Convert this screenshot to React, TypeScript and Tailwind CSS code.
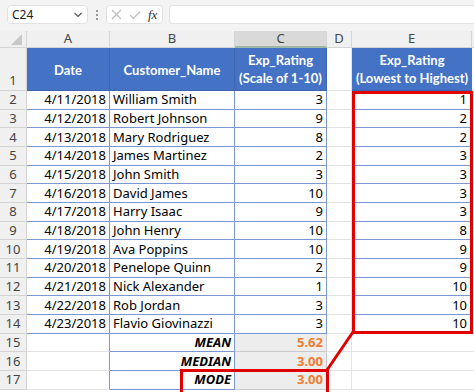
import React from "react";

const cols = [27, 83, 125, 92, 25, 120];
const data: [string, string, string, string][] = [
  ["4/11/2018", "William Smith", "3", "1"],
  ["4/12/2018", "Robert Johnson", "9", "2"],
  ["4/13/2018", "Mary Rodriguez", "8", "2"],
  ["4/14/2018", "James Martinez", "2", "3"],
  ["4/15/2018", "John Smith", "3", "3"],
  ["4/16/2018", "David James", "10", "3"],
  ["4/17/2018", "Harry Isaac", "9", "3"],
  ["4/18/2018", "John Henry", "10", "8"],
  ["4/19/2018", "Ava Poppins", "10", "9"],
  ["4/20/2018", "Penelope Quinn", "2", "9"],
  ["4/21/2018", "Nick Alexander", "1", "10"],
  ["4/22/2018", "Rob Jordan", "3", "10"],
  ["4/23/2018", "Flavio Giovinazzi", "3", "10"],
];
const stats: [string, string][] = [
  ["MEAN", "5.62"],
  ["MEDIAN", "3.00"],
  ["MODE", "3.00"],
];

const RH = "h-[18.67px]";

function RowHead({ n, tall }: { n: number; tall?: boolean }) {
  return (
    <div
      className={`w-[27px] shrink-0 bg-[#f0f0f0] border-r border-b border-[#d4d4d4] text-[#444] text-[13px] font-normal flex justify-center ${
        tall ? "items-end pb-[1px]" : "items-center"
      }`}
      style={{ fontFamily: '"Noto Sans", sans-serif' }}
    >
      {n}
    </div>
  );
}

export default function App() {
  return (
    <div
      className="w-[474px] h-[392px] overflow-hidden bg-white relative"
      style={{ fontFamily: '"Noto Sans", "Open Sans", sans-serif' }}
    >
      {/* toolbar */}
      <div className="h-[31px] bg-[#f3f3f3] flex items-start pt-[5px] pl-[7px]">
        <div className="w-[81px] h-[19px] bg-white rounded-[4px] border border-[#e2e2e2] flex items-center justify-between px-[4px] text-[12px] text-[#222]">
          <span>C24</span>
          <svg width="10" height="8" viewBox="0 0 10 8">
            <path d="M1.5 2 L5 5.5 L8.5 2" fill="none" stroke="#555" strokeWidth="1.2" />
          </svg>
        </div>
        <div className="w-[18px] h-[19px] flex flex-col items-center justify-center gap-[2px]">
          <div className="w-[2px] h-[2px] bg-[#999]" />
          <div className="w-[2px] h-[2px] bg-[#999]" />
          <div className="w-[2px] h-[2px] bg-[#999]" />
        </div>
        <div className="w-[57px] h-[19px] bg-white rounded-[4px] border border-[#e2e2e2] flex items-center pl-[4px] gap-[7px]">
          <svg width="11" height="11" viewBox="0 0 11 11">
            <path d="M1 1 L10 10 M10 1 L1 10" stroke="#bdbdbd" strokeWidth="1.2" />
          </svg>
          <svg width="12" height="10" viewBox="0 0 12 10">
            <path d="M1 5 L4.5 8.5 L11 1.5" fill="none" stroke="#bdbdbd" strokeWidth="1.2" />
          </svg>
          <span
            className="text-[13px] italic text-[#333] leading-none"
            style={{ fontFamily: '"Liberation Serif", serif' }}
          >
            fx
          </span>
        </div>
        <div className="ml-[6px] flex-1 h-[19px] bg-white rounded-l-[4px] border border-r-0 border-[#e2e2e2]" />
      </div>

      {/* column header row */}
      <div className="flex h-[17px] text-[13px] text-[#444]">
        <div className="w-[27px] shrink-0 bg-[#f0f0f0] border-r border-b border-[#d4d4d4] relative">
          <svg width="27" height="17" className="absolute inset-0">
            <path d="M22 3 L22 14 L11 14 Z" fill="#c8c8c8" />
          </svg>
        </div>
        {["A", "B", "C", "D", "E"].map((c, i) => (
          <div
            key={c}
            style={{ width: cols[i + 1] }}
            className={`shrink-0 flex items-center justify-center border-r border-[#d4d4d4] ${
              c === "C"
                ? "bg-[#d9d9d9] border-b-2 border-b-[#9fb7a5]"
                : "bg-[#f0f0f0] border-b"
            }`}
          >
            {c}
          </div>
        ))}
        <div className="flex-1 bg-[#f0f0f0] border-b border-[#d4d4d4]" />
      </div>

      {/* header row 1 */}
      <div
        className="flex h-[43px] text-[13px] font-bold text-white leading-[18px] whitespace-nowrap"
        style={{ fontFamily: 'Lato, "Noto Sans", sans-serif' }}
      >
        <RowHead n={1} tall />
        <div className="w-[83px] shrink-0 bg-[#4472c4] border-r border-b border-[#3d64ad] flex items-center justify-center pt-[2px]">
          Date
        </div>
        <div className="w-[125px] shrink-0 bg-[#4472c4] border-r border-b border-[#3d64ad] flex items-center justify-center pt-[2px]">
          Customer_Name
        </div>
        <div className="w-[92px] shrink-0 bg-[#4472c4] border-r border-b border-[#3d64ad] flex flex-col items-center justify-center">
          <span>Exp_Rating</span>
          <span>(Scale of 1-10)</span>
        </div>
        <div className="w-[25px] shrink-0 border-r border-b border-[#e3e3e3]" />
        <div className="w-[120px] shrink-0 bg-[#4472c4] border-b border-[#3d64ad] flex flex-col items-center justify-center">
          <span>Exp_Rating</span>
          <span>(Lowest to Highest)</span>
        </div>
        <div className="flex-1 border-b border-[#e3e3e3]" />
      </div>

      {/* data rows */}
      {data.map((r, i) => (
        <div key={i} className={`flex ${RH} text-[13px] text-black leading-none`}>
          <RowHead n={i + 2} />
          <div className="w-[83px] shrink-0 border-r border-b border-[#7b97d1] flex items-center justify-end pr-[3px]">
            {r[0]}
          </div>
          <div className="w-[125px] shrink-0 border-r border-b border-[#7b97d1] flex items-center pl-[3px] whitespace-nowrap">
            {r[1]}
          </div>
          <div className="w-[92px] shrink-0 border-r border-b border-[#7b97d1] flex items-center justify-end pr-[3px]">
            {r[2]}
          </div>
          <div className="w-[25px] shrink-0 border-r border-b border-[#e3e3e3]" />
          <div className="w-[120px] shrink-0 border-b border-[#7b97d1] flex items-center justify-end pr-[5px]">
            {r[3]}
          </div>
          <div className="flex-1 border-b border-[#e3e3e3]" />
        </div>
      ))}

      {stats.map((s, i) => (
        <div key={s[0]} className={`flex ${RH} text-[13px] leading-none`}>
          <RowHead n={i + 15} />
          <div className="w-[83px] shrink-0 border-r border-b border-r-[#7b97d1] border-b-[#e3e3e3]" />
          <div className="w-[125px] shrink-0 border-r border-b border-[#7b97d1] flex items-center justify-end pr-[3px] font-bold italic text-black">
            {s[0]}
          </div>
          <div className="w-[92px] shrink-0 border-r border-b border-[#c9c9c9] bg-[#ededed] flex items-center justify-end pr-[3px] font-bold text-[#ed7d31]">
            {s[1]}
          </div>
          <div className="w-[25px] shrink-0 border-r border-b border-[#e3e3e3]" />
          <div className="w-[120px] shrink-0 border-b border-[#e3e3e3]" />
          <div className="flex-1 border-b border-[#e3e3e3]" />
        </div>
      ))}

      {/* red annotations overlay */}
      <svg
        width="474"
        height="392"
        className="absolute left-0 top-0 pointer-events-none"
      >
        <rect x="353.5" y="92.5" width="118" height="240" fill="none" stroke="#e00000" strokeWidth="3" />
        <rect x="181.5" y="370.5" width="146" height="30" fill="none" stroke="#e00000" strokeWidth="3" />
        <path d="M327 370 L353 332" stroke="#e00000" strokeWidth="3" fill="none" />
      </svg>
    </div>
  );
}
